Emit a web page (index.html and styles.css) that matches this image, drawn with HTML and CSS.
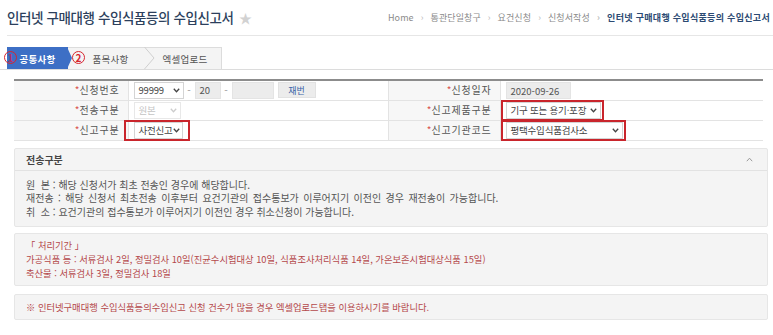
FILE: index.html
```html
<!DOCTYPE html>
<html lang="ko">
  <head>
    <meta charset="UTF-8" />
    <meta name="viewport" content="width=device-width, initial-scale=1.0" />
    <title>인터넷 구매대행 수입식품등의 수입신고서</title>
    <link rel="stylesheet" href="styles.css">
  </head>
  <body>
    <div class="head">
      <h1 class="title">인터넷 구매대행 수입식품등의 수입신고서 <span class="star">★</span></h1>
      <ol class="crumbs">
        <li>Home</li>
        <li>통관단일창구</li>
        <li>요건신청</li>
        <li>신청서작성</li>
        <li class="current">인터넷 구매대행 수입식품등의 수입신고서</li>
      </ol>
    </div>

    <ul class="tabs">
      <li class="tab active">
        공통사항
        <svg class="arrow" width="6" height="22" viewBox="0 0 6 22"><polygon points="0,0 5,11 0,22" fill="#3d6fc5" /></svg>
        <span class="mark mark-1">1</span>
      </li>
      <li class="tab">
        품목사항
        <svg class="chev" width="11" height="22" viewBox="0 0 11 22"><polyline points="0.5,0 10,11 0.5,22" fill="none" stroke="#cfcfcf" stroke-width="1" /></svg>
        <span class="mark mark-2">2</span>
      </li>
      <li class="tab last">엑셀업로드</li>
    </ul>

    <div class="panel">
      <table class="form">
        <colgroup>
          <col style="width:114px" />
          <col style="width:260px" />
          <col style="width:112px" />
          <col style="width:263px" />
        </colgroup>
        <tr>
          <th><em>*</em>신청번호</th>
          <td>
            <div class="field">
              <span class="select w50">99999 <svg class="caret" width="7" height="5" viewBox="0 0 7 5"><polyline points="0.8,0.8 3.5,3.8 6.2,0.8" fill="none" stroke="#444" stroke-width="1.3" /></svg></span>
              <span class="dash">-</span>
              <span class="input grey w26">20</span>
              <span class="dash">-</span>
              <span class="input grey w42"></span>
              <span class="btn">재번</span>
            </div>
          </td>
          <th><em>*</em>신청일자</th>
          <td><span class="input grey w65">2020-09-26</span></td>
        </tr>
        <tr>
          <th><em>*</em>전송구분</th>
          <td>
            <span class="select disabled w47">원본 <svg class="caret" width="7" height="5" viewBox="0 0 7 5"><polyline points="0.8,0.8 3.5,3.8 6.2,0.8" fill="none" stroke="#ccc" stroke-width="1.3" /></svg></span>
          </td>
          <th><em>*</em>신고제품구분</th>
          <td>
            <span class="mark-box right-a">
              <span class="select w95">기구 또는 용기·포장 <svg class="caret" width="7" height="5" viewBox="0 0 7 5"><polyline points="0.8,0.8 3.5,3.8 6.2,0.8" fill="none" stroke="#444" stroke-width="1.3" /></svg></span>
            </span>
          </td>
        </tr>
        <tr>
          <th><em>*</em>신고구분</th>
          <td>
            <span class="mark-box left-a">
              <span class="select w48">사전신고 <svg class="caret" width="7" height="5" viewBox="0 0 7 5"><polyline points="0.8,0.8 3.5,3.8 6.2,0.8" fill="none" stroke="#444" stroke-width="1.3" /></svg></span>
            </span>
          </td>
          <th><em>*</em>신고기관코드</th>
          <td>
            <span class="mark-box right-b">
              <span class="select w117">평택수입식품검사소 <svg class="caret" width="7" height="5" viewBox="0 0 7 5"><polyline points="0.8,0.8 3.5,3.8 6.2,0.8" fill="none" stroke="#444" stroke-width="1.3" /></svg></span>
            </span>
          </td>
        </tr>
      </table>

      <div class="box">
        <div class="box-head">
          전송구분
          <svg class="fold" width="7" height="5" viewBox="0 0 7 5"><polyline points="0.8,4.2 3.5,1.2 6.2,4.2" fill="none" stroke="#999" stroke-width="1" /></svg>
        </div>
        <div class="box-body">
          <p>원 &nbsp;본 : 해당 신청서가 최초 전송인 경우에 해당합니다.</p>
          <p class="wide">재전송 : 해당 신청서 최초전송 이후부터 요건기관의 접수통보가 이루어지기 이전인 경우 재전송이 가능합니다.</p>
          <p>취 &nbsp;소 : 요건기관의 접수통보가 이루어지기 이전인 경우 취소신청이 가능합니다.</p>
        </div>
      </div>

      <div class="box notice">
        <p>「 처리기간 」</p>
        <p>가공식품 등 : 서류검사 2일, 정밀검사 10일(진균수시험대상 10일, 식품조사처리식품 14일, 가온보존시험대상식품 15일)</p>
        <p>축산물 : 서류검사 3일, 정밀검사 18일</p>
      </div>

      <div class="box notice single">
        <p>※ 인터넷구매대행 수입식품등의수입신고 신청 건수가 많을 경우 엑셀업로드탭을 이용하시기를 바랍니다.</p>
      </div>
    </div>
  </body>
</html>
```

FILE: styles.css
```css
body {
  margin: 0;
  background-color: #fff;
  font-family: "Noto Sans CJK KR", "Noto Sans", sans-serif;
  font-size: 10px;
  color: #555;
}
p {
  margin: 0;
}
.head {
  display: flex;
  justify-content: space-between;
  align-items: center;
  height: 35px;
  margin-left: 7px;
  border-bottom: 1px solid #e6e6e6;
}
.title {
  margin: 0;
  font-size: 13.5px;
  font-weight: 500;
  letter-spacing: -0.4px;
  color: #2c3f5c;
  line-height: 18px;
}
.star {
  color: #d2d2d2;
  font-size: 13px;
  margin-left: 2px;
}
.crumbs {
  display: flex;
  list-style: none;
  margin: 0;
  padding: 0 3px 0 0;
  font-size: 9px;
  color: #8a8a8a;
  letter-spacing: 0.1px;
}
.crumbs li + li::before {
  content: "›";
  margin: 0 7px;
  color: #bbb;
}
.crumbs .current {
  color: #2c4a72;
  font-weight: 700;
  letter-spacing: 0.3px;
}

/* tabs */
.tabs {
  display: flex;
  list-style: none;
  margin: 11px 0 0;
  padding: 0 0 0 7px;
  border-bottom: 1px solid #dcdcdc;
}
.tab {
  position: relative;
  height: 22px;
  line-height: 22px;
  box-sizing: border-box;
  background-color: #f4f4f4;
  border-top: 1px solid #dcdcdc;
  text-align: center;
  font-size: 9.5px;
  color: #555;
  letter-spacing: 0.3px;
}
.tab:nth-child(1) {
  width: 61px;
}
.tab:nth-child(2) {
  width: 79px;
  padding-left: 6px;
}
.tab:nth-child(3) {
  width: 75px;
  padding-left: 2px;
}
.tab.active {
  background-color: #3d6fc5;
  border-top-color: #3d6fc5;
  color: #fff;
  font-weight: 700;
}
.tab.last {
  border-right: 1px solid #dcdcdc;
}
.arrow {
  position: absolute;
  top: -1px;
  right: -5px;
  z-index: 2;
}
.chev {
  position: absolute;
  top: -1px;
  right: -8px;
  z-index: 2;
}
.mark {
  position: absolute;
  top: 3px;
  width: 11px;
  height: 11px;
  line-height: 11px;
  border: 1.5px solid #d7262e;
  border-radius: 50%;
  color: #d7262e;
  font-size: 10px;
  font-weight: 700;
  text-align: center;
  letter-spacing: 0;
  z-index: 3;
}
.mark-1 {
  left: -3px;
  color: #b02f6a;
}
.mark-2 {
  left: 4px;
}

/* panel */
.panel {
  margin-left: 7px;
  width: 754px;
  padding: 9px 6px 20px 7px;
  border-right: 1px solid #e6e6e6;
}
.form {
  width: 749px;
  border-collapse: collapse;
  table-layout: fixed;
  border-top: 2px solid #8c8c8c;
}
.form th,
.form td {
  height: 20px;
  padding: 0 5px;
  border-bottom: 1px solid #e3e3e3;
  box-sizing: border-box;
  vertical-align: middle;
}
.form th {
  background-color: #f7f7f7;
  border-right: 1px solid #e3e3e3;
  text-align: right;
  font-weight: 400;
  padding-right: 8px;
  letter-spacing: 0.8px;
  color: #555;
  line-height: 18px;
}
.form td {
  border-right: 1px solid #e3e3e3;
  line-height: 16px;
}
.form td:last-child {
  border-right: none;
}
.form th em {
  font-style: normal;
  color: #d9534f;
  letter-spacing: 0;
}
.field {
  display: flex;
  align-items: center;
}
.select,
.input {
  display: inline-flex;
  align-items: center;
  box-sizing: border-box;
  height: 17px;
  padding: 0 3px 0 4px;
  border: 1px solid #d4d4d4;
  background-color: #fff;
  font-size: 9.5px;
  color: #444;
  white-space: nowrap;
  overflow: hidden;
  vertical-align: middle;
}
.select {
  letter-spacing: -0.2px;
}
.caret {
  flex-shrink: 0;
  margin-left: auto;
}
.select.disabled {
  color: #c4c4c4;
  border-color: #e8e8e8;
}
.input.grey {
  background-color: #ececec;
  border-color: #e4e4e4;
  color: #555;
}
.w26 { width: 26px; }
.w42 { width: 42px; }
.w47 { width: 47px; }
.w48 { width: 49px; }
.w50 { width: 50px; }
.w65 { width: 65px; }
.w95 { width: 95px; }
.w117 { width: 117px; }
.dash {
  width: 11px;
  text-align: center;
  color: #999;
}
.btn {
  margin-left: 4px;
  width: 38px;
  height: 16px;
  line-height: 16px;
  background-color: #ececec;
  border: 1px solid #e2e2e2;
  text-align: center;
  color: #3a64a8;
  font-size: 9px;
  box-sizing: border-box;
}
.mark-box {
  display: inline-flex;
  align-items: center;
  box-sizing: border-box;
  height: 21px;
  margin-top: -1px;
  margin-bottom: -1px;
  border: 2px solid #c9252c;
  vertical-align: middle;
}
.left-a {
  margin-left: -10px;
  padding: 0 5px 0 8px;
}
.right-a {
  margin-left: -5px;
  padding: 0 1px 0 3px;
}
.right-b {
  margin-left: -5px;
  padding: 0 1px 0 3px;
}

/* info boxes */
.box {
  margin-top: 7px;
  background-color: #f4f4f4;
  border: 1px solid #e6e6e6;
  border-radius: 2px;
}
.box-head {
  display: flex;
  justify-content: space-between;
  align-items: center;
  height: 21px;
  padding: 0 14px 0 11px;
  border-bottom: 1px solid #e2e2e2;
  font-weight: 700;
  color: #444;
}
.box-body {
  padding: 7px 11px 8px;
  line-height: 13.5px;
}
.box-body .wide {
  word-spacing: 1.6px;
}
.notice {
  margin-top: 6px;
  padding: 4px 11px 5px;
  font-size: 9.3px;
  line-height: 14px;
  color: #b4484b;
}
.notice.single {
  margin-top: 8px;
  padding: 5px 11px 5px;
}
```
